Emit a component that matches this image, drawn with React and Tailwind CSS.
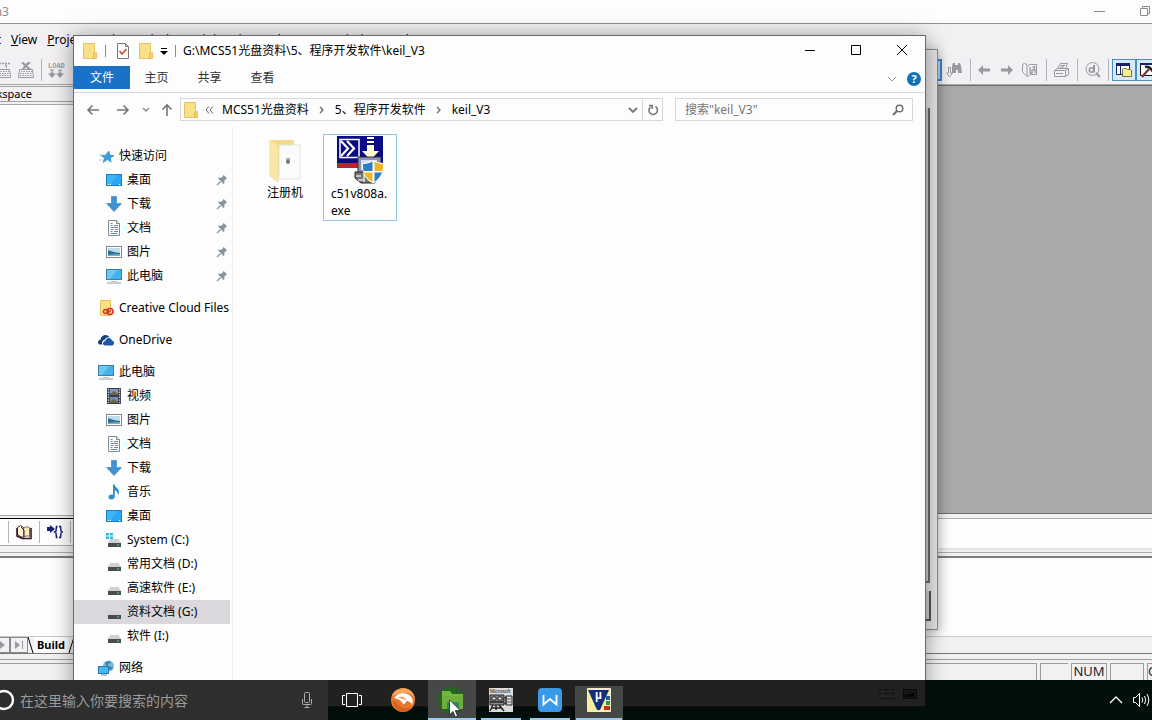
import React, { useState } from "react";

const Folder = ({ className = "w-4 h-4" }) => (
  <svg viewBox="0 0 16 16" className={className}>
    <path d="M1.5 .5h11v10l1 1v4h-12z" fill="#fbe08a" stroke="#e3c264" />
    <path d="M11.5 10.5l3-1v6h-3z" fill="#f7d162" stroke="#dcb54e" strokeWidth=".7" />
  </svg>
);

const Star = () => (
  <svg viewBox="0 0 16 16" className="w-4 h-4">
    <path d="M9.8 2l1 4 4.2.6-3.6 2.2.7 4.4-3.6-2.6L4 13.5l1.5-4.6L2 6.4l4.6-.2z" fill="#35a1dc" stroke="#2683bd" strokeWidth=".6" transform="translate(1 1)" />
    <path d="M1 7h3M1 12h3" stroke="#9dd0ee" />
  </svg>
);

const Desktop = () => (
  <svg viewBox="0 0 16 16" className="w-4 h-4">
    <rect x=".5" y="2.5" width="15" height="11" fill="#2ba8f5" stroke="#1a7dbd" />
    <path d="M1 3h10L4 13H1z" fill="#4fbcfb" opacity=".6" />
    <path d="M2 12.5h1M4 12.5h1M13 12.5h1" stroke="#fff" />
  </svg>
);

const Download = () => (
  <svg viewBox="0 0 16 16" className="w-4 h-4">
    <path d="M5.5.5h5v7h5L8 15.5.5 7.5h5z" fill="#3f93d5" stroke="#3580bb" strokeWidth=".6" />
  </svg>
);

const Doc = () => (
  <svg viewBox="0 0 16 16" className="w-4 h-4">
    <path d="M2.5.5h8l3 3v12h-11z" fill="#fff" stroke="#7f8b93" />
    <path d="M10.500.5v3h3" fill="#dde5ea" stroke="#7f8b93" />
    <path d="M4.500 3.500h2M4.500 5.500h2M8 5.500h4M4.500 7.500h7.500M4.500 9.500h3M9 9.500h3M4.500 11.500h2M8 11.500h4M4.500 13.500h7" stroke="#4a93b8" />
  </svg>
);

const Picture = () => (
  <svg viewBox="0 0 16 16" className="w-4 h-4">
    <rect x=".5" y="2.500" width="15" height="11" fill="#fff" stroke="#7f8b93" />
    <rect x="2" y="4" width="12" height="8" fill="#bcdff0" />
    <path d="M2 6.500c3 0 5 2 12 2.500v2H2z" fill="#2f6c88" />
    <path d="M2 11c4-1 8-.5 12-1v2H2z" fill="#6ab0cd" />
  </svg>
);

const Computer = () => (
  <svg viewBox="0 0 16 16" className="w-4 h-4">
    <rect x=".5" y="1.500" width="15" height="10" fill="#42b4ec" stroke="#3b7fa8" />
    <path d="M1 2h10L4 11H1z" fill="#7cd0f6" opacity=".7" />
    <path d="M5 13.500h6" stroke="#b6c6cf" />
    <path d="M1 15h14" stroke="#8ba1ae" />
  </svg>
);

const Creative = () => (
  <svg viewBox="0 0 16 16" className="w-4 h-4">
    <path d="M2.500.5h10v15h-10z" fill="#fbe08a" stroke="#e3c264" />
    <ellipse cx="8" cy="11.500" rx="2.500" ry="2" fill="none" stroke="#d8341c" strokeWidth="1.600" />
    <ellipse cx="12" cy="11.500" rx="3" ry="3" fill="none" stroke="#d8341c" strokeWidth="1.600" />
    <path d="M8.500 13.500l4.500-3" stroke="#d8341c" strokeWidth="1.300" />
  </svg>
);

const OneDrive = () => (
  <svg viewBox="0 0 16 16" className="w-4 h-4">
    <path d="M0 10.500c0-2 1.300-2.700 2.500-2.800C2.800 4.500 5.300 3 7.500 3c2 0 3.300 1 4 2.300C9 5 7 6.200 6.500 8 4.500 8 3.600 10 4.200 12.500H2C.8 12.500 0 11.700 0 10.500z" fill="#123f80" />
    <path d="M5 11.500c0-1.500 1-2.400 2.400-2.400C7.600 7 9.200 6 10.700 6c1.700 0 2.800 1 3.100 2.600 1.400.1 2.200 1 2.200 2.300 0 1.400-1 2.600-2.400 2.600H7.200C5.800 13.500 5 12.600 5 11.500z" fill="#1a57a6" />
  </svg>
);

const Video = () => (
  <svg viewBox="0 0 16 16" className="w-4 h-4">
    <rect x="1" y="0" width="14" height="16" fill="#3a3d42" />
    <path d="M2.500 1v14M13.500 1v14" stroke="#d7dade" strokeWidth="1.400" strokeDasharray="1.300 1.300" />
    <rect x="4" y="1" width="8" height="6" fill="#7b9ccf" />
    <rect x="4" y="9" width="8" height="6" fill="#6f8fc4" />
    <path d="M4 6l4-3 4 3v1H4zM4 14l3-3 5 3v1H4z" fill="#6e6248" />
  </svg>
);

const Music = () => (
  <svg viewBox="0 0 16 16" className="w-4 h-4">
    <path d="M7 .5h1.600c.5 3 4.400 4 4.400 7.500 0 1.500-.6 2.500-1.200 3.200C12 8.500 11 7 8.800 6.300V12.500c0 1.800-1.700 3-3.500 3S2.500 14.300 2.500 13c0-1.700 2-3 4.500-2.300z" fill="#2a8fcb" />
  </svg>
);

const Drive = ({ system }) => (
  <svg viewBox="0 0 16 16" className="w-4 h-4">
    {system && <path d="M0 1h3v2.500H0zM4 1h3v2.500H4zM0 4.500h3V7H0zM4 4.500h3V7H4z" fill="#2fb4dc" />}
    <path d="M4 7h8.500l2.500 4H2z" fill="#cfd2d3" />
    <path d="M2 11h13v4H2z" fill="#484c4f" />
    <path d="M11 13h2" stroke="#5fe08c" />
  </svg>
);

const Network = () => (
  <svg viewBox="0 0 16 16" className="w-4 h-4">
    <circle cx="10.500" cy="6" r="5.500" fill="#7ab6da" />
    <path d="M7 3c2-2 5-2 6-1-1 2-3 1-3 3s4 1 5 3c-2 2-3 2-5 1" fill="#3b83b4" />
    <rect x=".5" y="6.500" width="10" height="7" fill="#45b7f2" stroke="#2d79ab" />
    <path d="M3 15h6" stroke="#6f8d9e" />
  </svg>
);

const Pin = () => (
  <svg viewBox="0 0 12 12" className="w-3 h-3">
    <path d="M7.500.8l3.700 3.700-1.200.5L8.300 6.700l.2 2.600-1 .6L2.200 4.600l.6-1 2.600.2L7.100 2z" fill="#8795a1" />
    <path d="M4.500 7.500L1 11" stroke="#8795a1" strokeWidth="1.200" />
  </svg>
);

const groups = [
  {
    label: "快速访问",
    icon: <Star />,
    children: [
      { label: "桌面", icon: <Desktop />, pinned: true },
      { label: "下载", icon: <Download />, pinned: true },
      { label: "文档", icon: <Doc />, pinned: true },
      { label: "图片", icon: <Picture />, pinned: true },
      { label: "此电脑", icon: <Computer />, pinned: true },
    ],
  },
  { label: "Creative Cloud Files", icon: <Creative />, children: [] },
  { label: "OneDrive", icon: <OneDrive />, children: [] },
  {
    label: "此电脑",
    icon: <Computer />,
    children: [
      { label: "视频", icon: <Video /> },
      { label: "图片", icon: <Picture /> },
      { label: "文档", icon: <Doc /> },
      { label: "下载", icon: <Download /> },
      { label: "音乐", icon: <Music /> },
      { label: "桌面", icon: <Desktop /> },
      { label: "System (C:)", icon: <Drive system /> },
      { label: "常用文档 (D:)", icon: <Drive /> },
      { label: "高速软件 (E:)", icon: <Drive /> },
      { label: "资料文档 (G:)", icon: <Drive /> },
      { label: "软件 (I:)", icon: <Drive /> },
    ],
  },
  { label: "网络", icon: <Network />, children: [] },
];

const menus = ["View", "Project", "Debug", "Flash", "Peripherals", "Tools", "SVCS", "Window", "Help"];

const ToolDivider = () => <div className="w-px h-[22px] bg-[#b5b3b7] shrink-0" />;

const ToolButton = ({ label, children, className = "w-[23px]" }) => (
  <button aria-label={label} className={`h-[22px] shrink-0 flex items-center justify-center text-[#9b999d] ${className}`}>
    {children}
  </button>
);

const BuildIcon = ({ cancel }) => (
  <svg viewBox="0 0 16 16" className="w-4 h-4 shrink-0" fill="none" stroke="currentColor">
    <path d="M1.500 7.500h13l1 8H.5z" />
    <path d="M3 9.500h11M2 11.500h12M2 13.500h12" strokeDasharray="1.500 1" />
    {cancel ? (
      <path d="M4 .5c2 1 4 4 8 7M12 0C9 2 7 4 5 7" strokeWidth="2.200" />
    ) : (
      <path d="M1 1.500h14M3 3.500h3M10 3.500h3M4 5.500h1M11 5.500h1" strokeWidth="1.300" strokeDasharray="2 1" />
    )}
  </svg>
);

function KeilToolbar() {
  return (
    <div className="h-[28px] flex items-center shrink-0">
      <ToolButton label="Build target" className="w-[11px] overflow-hidden">
        <span className="flex justify-end w-[11px]"><BuildIcon /></span>
      </ToolButton>
      <ToolButton label="Stop build" className="w-[30px]"><BuildIcon cancel /></ToolButton>
      <ToolDivider />
      <ToolButton label="Download to flash" className="w-[28px]">
        <svg viewBox="0 0 18 18" className="w-[18px] h-[18px]">
          <text x="1" y="7" fontSize="7" fontWeight="bold" fontFamily="Liberation Mono, monospace" fill="currentColor">LOAD</text>
          <path d="M5 8.500V14M13 8.500V14" stroke="currentColor" strokeWidth="3" strokeDasharray="2 .8" />
          <path d="M1 12.500h8L5 17zM9 12.500h8L13 17z" fill="currentColor" />
        </svg>
      </ToolButton>
      <div className="flex items-center ml-auto w-[234px] overflow-hidden">
        <div className="w-[24px] h-[22px] shrink-0 bg-[#c2dcf3] border-2 border-[#3f86cc]" />
        <ToolButton label="Find in files" className="w-[28px] pr-1">
          <svg viewBox="0 0 18 16" className="w-[18px] h-4 shrink-0">
            <path d="M7 4l1-3h2v2h3V1h2l1 3 1 7h-4V8h-2v3H7z" fill="currentColor" />
            <path d="M3.500 5.500V11H1.500l3 4 3-4H5.500V5.500z" fill="#f3f1f4" stroke="currentColor" />
          </svg>
        </ToolButton>
        <ToolDivider />
        <ToolButton label="Back" className="w-[26px]">
          <svg viewBox="0 0 12 12" className="w-3 h-3"><path d="M0 6l5-5v3.500h7v3H5V11z" fill="currentColor" /></svg>
        </ToolButton>
        <ToolButton label="Forward" className="w-[20px]">
          <svg viewBox="0 0 12 12" className="w-3 h-3"><path d="M12 6L7 1v3.500H0v3h7V11z" fill="currentColor" /></svg>
        </ToolButton>
        <ToolButton label="Books" className="w-[29px] pr-1">
          <svg viewBox="0 0 16 16" className="w-4 h-4 shrink-0" fill="none" stroke="currentColor">
            <path d="M.5 3.500q0-2 2-2t2.500 2v11l-3-3-1.500-2zM5.500 3.500l3-1h6v10h-6l-3 2" />
            <path d="M8 5v6h2V8h3v3M10.500 5h2v2" strokeWidth="1.300" />
          </svg>
        </ToolButton>
        <ToolDivider />
        <ToolButton label="Print" className="w-[30px]">
          <svg viewBox="0 0 18 16" className="w-[18px] h-4" fill="none" stroke="currentColor">
            <path d="M4.500 6.500l3-5h7l-2 5M1.500 8.500l3-2h11v6l-3 2h-11zM1.500 8.500h11v6M12.500 8.500l3-2M8 3.500h4M7 5h4M3 11.500h7" />
          </svg>
        </ToolButton>
        <ToolDivider />
        <ToolButton label="Debug session" className="w-[30px]">
          <svg viewBox="0 0 16 16" className="w-4 h-4" fill="none" stroke="currentColor">
            <circle cx="7.500" cy="7" r="6.500" />
            <circle cx="6.500" cy="8" r="2.200" strokeWidth="1.600" />
            <path d="M9 3v7.500M11 11l4 4" strokeWidth="2" />
          </svg>
        </ToolButton>
        <ToolDivider />
        <div className="w-[3px] shrink-0" />
        <ToolButton label="Project window" className="w-[24px] bg-[#d7e9f8] border border-[#4a90ba]">
          <svg viewBox="0 0 16 16" className="w-4 h-4 shrink-0">
            <path d="M.5 1.500h13v11H.5z" fill="#fff" stroke="#15256b" />
            <path d="M0 1h14v3H0z" fill="#15256b" /><path d="M4.500 4v9" stroke="#15256b" />
            <path d="M6.500 7.500l1-1h3l1 1h3l1 1v6h-9z" fill="#f5ef9b" stroke="#77702a" />
          </svg>
        </ToolButton>
        <ToolButton label="Output window" className="w-[24px] bg-[#d7e9f8] border border-[#4a90ba]">
          <svg viewBox="0 0 16 16" className="w-4 h-4 shrink-0">
            <path d="M.5 1.500h15v12H.5z" fill="#fff" stroke="#111" /><path d="M0 1h16v2H0z" fill="#15256b" />
            <path d="M2 15L9 7" stroke="#7b3a34" strokeWidth="2.200" /><path d="M5 5c3-1 5 0 9 6" fill="none" stroke="#222" strokeWidth="2.400" />
          </svg>
        </ToolButton>
      </div>
    </div>
  );
}

function KeilWindow() {
  return (
    <div className="flex-1 min-h-0 flex flex-col bg-[#f2f0f3]">
      <div className="h-6 shrink-0 flex items-center bg-[#fdfdfd] border-b border-[#929193] text-[#8b8a8c]">
        <div className="w-[9px] flex justify-end overflow-hidden whitespace-nowrap">µVision3</div>
        <button aria-label="Minimize" className="ml-auto mr-[34px]">
          <svg viewBox="0 0 12 12" className="w-3 h-3"><path d="M1 5.500h11" stroke="currentColor" /></svg>
        </button>
        <button aria-label="Restore" className="mr-px">
          <svg viewBox="0 0 12 12" className="w-3 h-3" fill="none" stroke="currentColor"><path d="M1.500 2.500h7v7h-7zM3.500 2.500v-2h7v7h-2" /></svg>
        </button>
      </div>
      <div className="h-8 shrink-0 flex items-center gap-[10px] text-black">
        <div className="w-px flex justify-end overflow-hidden">Edit</div>
        {menus.map((m) => (
          <button key={m}>
            <span className="underline">{m[0]}</span>
            {m.slice(1)}
          </button>
        ))}
      </div>
      <KeilToolbar />
      <div className="flex-1 min-h-0 flex border-t border-[#a9a7aa]">
        <div className="w-[210px] flex flex-col">
          <div className="h-4 mt-px border-y border-[#a3a1a4] flex items-center text-[11px] text-black">
            <div className="w-8 flex justify-end overflow-hidden whitespace-nowrap">Project Workspace</div>
          </div>
          <div className="flex-1 mt-[2px] bg-[#fdfdfd] border-y border-[#aaa]" />
          <div className="h-7 mt-[2px] mb-1 border-t border-black flex items-center bg-[#fdfdfd] border-b border-b-[#aaa]">
            <div className="w-2 shrink-0" />
            <ToolDivider />
            <ToolButton label="Books" className="w-[30px]">
              <svg viewBox="0 0 16 16" className="w-4 h-4">
                <path d="M1.500 3.500l3-2 3 2v10l-3-1-3-2z" fill="#fbf6cf" stroke="#4a2436" />
                <path d="M7.500 4.500c2-2 4-2 6-1v9c-2-1-4-1-6 1z" fill="#f7ecc0" stroke="#8a6a50" />
                <path d="M1 4v8l5 2.500h9V4" fill="none" stroke="#3b1426" strokeWidth="1.600" />
                <path d="M5 3l3 3v7" fill="none" stroke="#3b1426" />
              </svg>
            </ToolButton>
            <ToolDivider />
            <ToolButton label="Functions" className="w-[30px]">
              <svg viewBox="0 0 16 16" className="w-4 h-4">
                <path d="M0 3h3V1l5 4-5 4V7H0z" fill="#1b2170" />
                <path d="M10.500 2.500H9.500L9 7 7.500 8 9 9l.5 4.500h1M12 2.500h1.500L14 7l1.500 1L14 9l-.5 4.500H12" fill="none" stroke="#1b2170" strokeWidth="1.500" />
              </svg>
            </ToolButton>
            <ToolDivider />
          </div>
        </div>
        <div className="flex-1 flex flex-col">
          <div className="flex-1 bg-[#aaa8ab] border-y border-[#6f6e70]" />
          <div className="h-8 mt-1 border-t border-[#b0aeb1] border-b-2 border-b-[#e4e2e5] bg-[#fdfdfd]" />
        </div>
      </div>
      <div className="h-[102px] mt-[2px] shrink-0 flex flex-col border-t border-[#aaa]">
        <div className="flex-1 mt-[3px] bg-[#fdfdfd] border-t-2 border-[#7d7b7e] border-b border-b-[#c9c7ca]" />
        <div className="h-[17px] flex border-b border-[#777]">
          <button aria-label="Next tab" className="w-[10px] flex items-center border border-l-0 border-[#8b898c] text-[#9b999d]">
            <svg viewBox="0 0 8 10" className="w-2 h-[10px]"><path d="M0 1l5 4-5 4z" fill="currentColor" /></svg>
          </button>
          <button aria-label="Last tab" className="w-[18px] flex items-center justify-center border border-[#8b898c] text-[#9b999d]">
            <svg viewBox="0 0 8 10" className="w-2 h-[10px]"><path d="M0 1l5 4-5 4z" fill="currentColor" /><path d="M7.500 1v8" stroke="currentColor" /></svg>
          </button>
          <svg viewBox="0 0 6 16" className="w-[6px] h-4"><path d="M0 0l5 16" stroke="#000" /></svg>
          <button className="px-[3px] font-bold text-[11px] text-black bg-[#fdfdfd]">Build</button>
          <svg viewBox="0 0 6 16" className="w-[6px] h-4"><path d="M6 0L1 16" stroke="#000" /></svg>
        </div>
      </div>
      <div className="h-[21px] mt-[5px] shrink-0 pt-[3px] flex gap-[3px] border-t border-[#9d9b9e] text-[13px] text-[#222]">
        <div className="flex-1 border-t border-r border-[#9d9b9e]" />
        <div className="w-7 border-t border-l border-[#9d9b9e]" />
        <div className="w-9 border-t border-x border-[#9d9b9e] flex items-center justify-center">NUM</div>
        <div className="w-[34px] border-t border-x border-[#9d9b9e]" />
        <div className="w-[5px] border-t border-l border-[#9d9b9e] flex items-center overflow-hidden">OVR</div>
      </div>
    </div>
  );
}

function NavPane() {
  const [selected, setSelected] = useState("资料文档 (G:)");

  return (
    <nav className="w-[156px] shrink-0 pt-[18px] flex flex-col gap-2 overflow-hidden text-black">
      {groups.map((group) => (
        <div key={group.label + group.children.length}>
          <button className="h-6 w-full pl-6 flex items-center gap-[5px] whitespace-nowrap">
            <span className="shrink-0">{group.icon}</span>
            {group.label}
          </button>
          {group.children.map((item) => (
            <button
              key={item.label}
              onClick={() => setSelected(item.label)}
              className={`h-6 w-full pl-8 pr-[2px] flex items-center gap-[5px] whitespace-nowrap ${
                item.label === selected ? "bg-[#dad8dd]" : ""
              }`}
            >
              <span className="shrink-0">{item.icon}</span>
              {item.label}
              {item.pinned && <span className="ml-auto"><Pin /></span>}
            </button>
          ))}
        </div>
      ))}
    </nav>
  );
}

const Crumb = ({ children }) => <button className="whitespace-nowrap">{children}</button>;

const CrumbArrow = () => (
  <svg viewBox="0 0 6 8" className="w-[6px] h-2 shrink-0" fill="none" stroke="#666" strokeWidth="1.300"><path d="M1 1l3 3-3 3" /></svg>
);

function Explorer() {
  return (
    <section className="absolute left-[73px] right-[226px] top-[35px] bottom-[13px] bg-[#fdfdfd] border border-[#6a696b] shadow-[0_2px_20px_rgba(0,0,0,0.4)] flex flex-col text-black">
      <header className="h-[30px] shrink-0 flex items-center pl-2">
        <Folder className="w-4 h-4 mr-[7px]" />
        <div className="w-px h-3 bg-[#8a8a8a] mr-[9px]" />
        <button aria-label="属性" className="mr-[7px]">
          <svg viewBox="0 0 16 16" className="w-4 h-4">
            <path d="M2.500.5h8l3 3v12h-11z" fill="#fdfdfd" stroke="#77767a" />
            <path d="M10.500.5v3h3" fill="none" stroke="#77767a" />
            <path d="M4.500 8l2.500 3 4.500-5" fill="none" stroke="#c4532d" strokeWidth="1.600" />
          </svg>
        </button>
        <button aria-label="新建文件夹" className="mr-[6px]"><Folder /></button>
        <button aria-label="自定义快速访问工具栏" className="mr-[7px]">
          <svg viewBox="0 0 8 8" className="w-2 h-2"><path d="M1 1.500h6" stroke="#000" /><path d="M0 4h8L4 8z" /></svg>
        </button>
        <div className="w-px h-3 bg-[#8a8a8a] mr-[7px]" />
        <h1>G:\MCS51光盘资料\5、程序开发软件\keil_V3</h1>
        <div className="ml-auto flex">
          <button aria-label="最小化" className="w-[46px] h-[30px] flex items-center justify-center">
            <svg viewBox="0 0 12 12" className="w-3 h-3"><path d="M1 5.500h10" stroke="#000" /></svg>
          </button>
          <button aria-label="最大化" className="w-[46px] h-[30px] flex items-center justify-center">
            <svg viewBox="0 0 12 12" className="w-3 h-3"><path d="M1.500 .5h9v9h-9z" fill="none" stroke="#000" /></svg>
          </button>
          <button aria-label="关闭" className="w-[46px] h-[30px] flex items-center justify-center">
            <svg viewBox="0 0 12 12" className="w-3 h-3"><path d="M1 0l10 10M11 0L1 10" stroke="#000" /></svg>
          </button>
        </div>
      </header>

      <div className="h-[27px] shrink-0 flex items-start border-b border-[#d5d8da] text-[#333]">
        <button className="w-14 h-[23px] bg-[#1a72c8] text-white">文件</button>
        <button className="w-[53px] h-[23px]">主页</button>
        <button className="w-[53px] h-[23px]">共享</button>
        <button className="w-[53px] h-[23px]">查看</button>
        <button aria-label="展开功能区" className="ml-auto mr-[10px] h-[26px]">
          <svg viewBox="0 0 10 10" className="w-[10px] h-[10px]" fill="none" stroke="#999"><path d="M1 3l4 4 4-4" /></svg>
        </button>
        <button aria-label="帮助" className="mr-1 mt-[6px] w-[14px] h-[14px] rounded-full bg-[#1272b8] text-white text-[11px] leading-[14px] font-bold">?</button>
      </div>

      <div className="h-[33px] shrink-0 flex items-center pl-3">
        <button aria-label="后退" className="mr-[16px]">
          <svg viewBox="0 0 14 14" className="w-[14px] h-[14px]" fill="none" stroke="#757575" strokeWidth="1.600"><path d="M13 7H2M6.500 2.500L2 7l4.500 4.500" /></svg>
        </button>
        <button aria-label="前进" className="mr-[12px]">
          <svg viewBox="0 0 14 14" className="w-[14px] h-[14px]" fill="none" stroke="#757575" strokeWidth="1.600"><path d="M1 7h11M7.500 2.500L12 7l-4.500 4.500" /></svg>
        </button>
        <button aria-label="最近浏览的位置" className="mr-[10px]">
          <svg viewBox="0 0 8 8" className="w-2 h-2" fill="none" stroke="#888" strokeWidth="1.400"><path d="M1 2l3 3 3-3" /></svg>
        </button>
        <button aria-label="上移" className="mr-[6px]">
          <svg viewBox="0 0 14 14" className="w-[14px] h-[14px]" fill="none" stroke="#757575" strokeWidth="1.600"><path d="M7 13V2M2.500 6.500L7 2l4.500 4.500" /></svg>
        </button>
        <div className="flex-1 h-[23px] flex items-center border border-[#d6d8da] pl-[2px]">
          <Folder />
          <button aria-label="上级文件夹" className="w-[23px] flex justify-center pr-[3px]">
            <svg viewBox="0 0 9 8" className="w-[9px] h-2" fill="none" stroke="#666"><path d="M4 .5L1 4l3 3.500M8 .5L5 4l3 3.500" /></svg>
          </button>
          <Crumb>MCS51光盘资料</Crumb>
          <span className="w-[26px] flex justify-center"><CrumbArrow /></span>
          <Crumb>5、程序开发软件</Crumb>
          <span className="w-[26px] flex justify-center"><CrumbArrow /></span>
          <Crumb>keil_V3</Crumb>
          <button aria-label="以前的位置" className="ml-auto mr-1">
            <svg viewBox="0 0 10 10" className="w-[10px] h-[10px]" fill="none" stroke="#777" strokeWidth="1.800"><path d="M1 3l4 4 4-4" /></svg>
          </button>
          <button aria-label="刷新" className="w-5 h-[21px] border-l border-[#d6d8da] flex items-center justify-center">
            <svg viewBox="0 0 12 12" className="w-3 h-3" fill="none" stroke="#707070" strokeWidth="1.500"><path d="M8.500 2.500A4.300 4.300 0 1 1 3.500 2.800" /><path d="M2 1.500h3.200v3.300" /></svg>
          </button>
        </div>
        <div className="w-[238px] h-[23px] ml-3 mr-3 flex items-center border border-[#d6d8da] pl-[9px] pr-2">
          <input aria-label="搜索" placeholder={'搜索"keil_V3"'} className="flex-1 min-w-0 outline-none placeholder:text-[#757575]" />
          <svg viewBox="0 0 12 12" className="w-3 h-3" fill="none" stroke="#707070" strokeWidth="1.500"><circle cx="7.500" cy="4.500" r="3.300" /><path d="M5 7l-4 4" strokeWidth="2" /></svg>
        </div>
      </div>

      <div className="flex-1 min-h-0 flex">
        <NavPane />
        <main className="flex-1 ml-[2px] border-l border-[#f0eff1] pt-2 pl-[15px] flex items-start gap-px">
          <button className="w-[74px] h-[87px] pt-[5px] flex flex-col items-center">
            <svg viewBox="0 0 34 43" className="w-[34px] h-[43px]">
              <path d="M2 1h24v35H2z" fill="#f3da8a" />
              <path d="M11 6h21v34H11z" fill="#fbfbfb" stroke="#e6e4e0" />
              <path d="M2 1l8 5v37l-8-6z" fill="#fbe7a4" stroke="#ecd288" strokeWidth=".6" />
              <ellipse cx="20" cy="22" rx="2" ry="3" fill="#777" />
              <path d="M19 20l2 1" stroke="#ccc" />
            </svg>
            <span className="leading-[17px] mt-[2px]">注册机</span>
          </button>
          <button className="w-[74px] h-[87px] pt-px flex flex-col items-center border border-[#93c6e4]">
            <svg viewBox="0 0 48 48" className="w-12 h-12">
              <path d="M1 0h46v31H1z" fill="#0b0b86" />
              <path d="M1 27h23v5H1z" fill="#c2202c" />
              <path d="M4 3.500h19v18H4z" fill="none" stroke="#fff" strokeWidth="1.500" />
              <path d="M5 5l7 7.500L5 20M11 5l7 7.500-7 7.500" fill="none" stroke="#fff" strokeWidth="2.200" />
              <path d="M31 1h7v2h-7zM31 5h7v2h-7z" fill="#fff" />
              <path d="M31 9h7v6h5l-8.500 9L26 15h5z" fill="#fffbd0" />
              <path d="M22 21h23v16H22z" fill="#8f93b8" stroke="#333" />
              <path d="M25 24h16v10H25z" fill="#d7dcf0" />
              <path d="M19 36h20v11H25l-6-5z" fill="#777" stroke="#222" />
              <path d="M20 40h5M22 44h7M28 38v8" stroke="#ddd" strokeWidth="1.500" />
              <path d="M26 27c4 0 8-1 11.500-3 3 2 6 3 10.500 3 0 10-3 17-10.500 20.500C29 44 26 37 26 27z" fill="#fff" />
              <path d="M27 28c4 0 7-1 9.500-2.500V35H27.500c-.4-2-.5-4-.5-7zM38.500 36.500H46c-1.500 4-4 7-7.500 9.500z" fill="#2b7fc4" />
              <path d="M38.500 25.500C41 27 43 28 47 28c0 3 0 5-.5 7h-8zM28 36.500h8.500V46c-4-2-7-5.500-8.500-9.500z" fill="#f0b428" />
            </svg>
            <span className="w-full pl-[7px] mt-px leading-[17px] text-left">c51v808a.<br />exe</span>
          </button>
        </main>
      </div>

      <footer className="h-6 shrink-0 flex items-center justify-end gap-2 pr-2">
        <button aria-label="详细信息">
          <svg viewBox="0 0 16 12" className="w-4 h-3" stroke="#555"><path d="M0 1.500h3M5 1.500h5M12 1.500h4M0 5.500h3M5 5.500h5M12 5.500h4M0 10.500h3M5 10.500h5M12 10.500h4" /></svg>
        </button>
        <button aria-label="大图标">
          <svg viewBox="0 0 14 12" className="w-[14px] h-3"><path d="M.5 1.500h13v9H.5z" fill="#999" stroke="#333" /><path d="M2 9V6l3 1 6-3v5z" fill="#111" /></svg>
        </button>
      </footer>
    </section>
  );
}

// Installer dialog sitting behind the explorer window
function SetupDialog() {
  return (
    <section className="absolute left-[400px] right-[214px] top-[49px] bottom-[90px] pt-[58px] pb-[8px] pr-[6px] flex flex-col gap-2 bg-[#e6e4e7] border border-[#8a888b] shadow-[2px_2px_10px_rgba(0,0,0,0.25)]">
      <div className="flex-1 mr-px border-r-2 border-b-2 border-[#6d6b6e] bg-[#cfcdd0]" />
      <div className="h-[30px] border-r-2 border-b-2 border-[#555356] bg-[#cfcdd0]" />
    </section>
  );
}

const tasks = [
  {
    label: "UC浏览器",
    icon: (
      <svg viewBox="0 0 26 26" className="w-[26px] h-[26px]">
        <circle cx="13" cy="13" r="12" fill="#e8782c" />
        <path d="M2 9C4 3 10 1 15 1.300 20 2 24 6 25 12c-2-4-5-6-9-6C10 6 7 8 2 9z" fill="#f6a55a" />
        <path d="M4 11c3-4 8-6 13-4 5 2 7 6 5 11-1-3-3-4-6-4 0 2-1 3-3 3-1-3-4-5-9-6z" fill="#fff" />
        <path d="M8 10c4-1 7 0 9 3-3-1-6-1-9-3z" fill="#f0a070" />
        <path d="M3 14c4 1 5 5 10 7 3 1 6 0 8-2-2 4-5 6-8 6-5 0-9-5-10-11z" fill="#d8601c" />
      </svg>
    ),
  },
  {
    label: "文件资源管理器",
    open: true,
    button: "bg-[#464846]",
    bar: "w-full",
    icon: (
      <svg viewBox="0 0 28 28" className="w-7 h-7">
        <circle cx="13" cy="14" r="13" fill="#1d6b14" opacity=".8" />
        <path d="M4 5h8l2 3h11v15H4z" fill="#79b543" />
        <path d="M4 10h21v13H4z" fill="#6fae3c" />
        <path d="M9 16h12v7h-3v-4h-6v4H9z" fill="#2f8a59" />
      </svg>
    ),
  },
  {
    label: "屏幕录像",
    open: true,
    bar: "w-10",
    icon: (
      <svg viewBox="0 0 24 24" className="w-6 h-6">
        <path d="M0 0h24v24H0z" fill="#dcdcdc" />
        <text x="1" y="5" fontSize="5" fontFamily="Liberation Sans, sans-serif" fill="#111">Microsoft</text>
        <path d="M1 7h14v10H1z" fill="#8d8d8d" stroke="#222" />
        <path d="M15 10l2-1v7l-2-1zM17 8h6v9h-6z" fill="#ddd" stroke="#222" />
        <path d="M3 9h4v3H3zM9 9h4v3H9z" fill="#e8e8e8" stroke="#222" />
        <path d="M1 14h13M4 17l-3 6M10 17l5 6M7 17v5M2 20h11" stroke="#222" strokeWidth="1.500" />
        <path d="M18 11h4M18 14h4" stroke="#555" />
      </svg>
    ),
  },
  {
    label: "WPS",
    open: true,
    bar: "w-10",
    icon: (
      <svg viewBox="0 0 24 24" className="w-6 h-6">
        <rect width="24" height="24" rx="4" fill="#3b9ae8" />
        <path d="M5.500 7v9.500L12 11l6.500 5.500V7" fill="none" stroke="#fff" strokeWidth="1.800" />
      </svg>
    ),
  },
  {
    label: "Keil uVision3",
    open: true,
    button: "bg-[linear-gradient(#0000_6px,#454745_6px)]",
    bar: "w-[46px]",
    icon: (
      <svg viewBox="0 0 24 24" className="w-6 h-6">
        <path d="M.5.5h23v23H.5z" fill="#f6ec9e" stroke="#f5f0c8" />
        <path d="M1 2h21L13 22h-3z" fill="#12307e" />
        <text x="8" y="11" fontSize="12" fontWeight="bold" fontFamily="Liberation Sans, sans-serif" fill="#fff">µ</text>
        <path d="M19 8h4v4h-4z" fill="#2458a8" /><path d="M19 13h4v4h-4z" fill="#2c9a3e" /><path d="M17 18h6v4h-6z" fill="#d12b20" />
      </svg>
    ),
  },
];

function Taskbar() {
  return (
    <footer className="absolute inset-x-0 bottom-0 h-10 flex bg-[rgba(2,3,0,0.88)] text-white">
      <div className="w-[328px] shrink-0 flex items-center bg-[#2e2e2e]">
        <div className="w-[15px] flex justify-end overflow-hidden">
          <svg viewBox="0 0 22 22" className="w-[22px] h-[22px] shrink-0"><circle cx="11" cy="11" r="9" fill="none" stroke="#fff" strokeWidth="2.400" /></svg>
        </div>
        <input aria-label="搜索" placeholder="在这里输入你要搜索的内容" className="ml-[5px] flex-1 min-w-0 text-[14px] outline-none placeholder:text-[#9a9a9a]" />
        <button aria-label="语音" className="mr-[14px]">
          <svg viewBox="0 0 14 18" className="w-[14px] h-[18px]" fill="none" stroke="#aaa"><rect x="4.500" y="1.500" width="5" height="10" rx="1" /><path d="M2.500 8v4.500q0 1 1 1h7q1 0 1-1V8M7 13.500v3M4.500 16.500h5" /></svg>
        </button>
      </div>
      <button aria-label="任务视图" className="w-[50px] pr-[2px] flex items-center justify-center">
        <svg viewBox="0 0 20 14" className="w-5 h-[14px]" fill="none" stroke="#fff"><path d="M4.500.5h11v13h-11zM3 2.500H.5v9H3M17 2.500h2.500v9H17" /></svg>
      </button>
      <div className="flex gap-px">
        {tasks.map((t) => (
          <button key={t.label} aria-label={t.label} className={`relative w-12 h-10 flex items-center justify-center first:ml-px ${t.button || ""}`}>
            {t.icon}
            {t.open && (
              <span className="absolute inset-x-0 bottom-0 flex justify-center">
                <span className={`h-[2px] bg-[#9cc9ee] ${t.bar}`} />
              </span>
            )}
          </button>
        ))}
      </div>
      <div className="ml-auto flex items-center gap-[9px] pr-[2px]">
        <button aria-label="显示隐藏的图标">
          <svg viewBox="0 0 14 10" className="w-[14px] h-[10px]" fill="none" stroke="#fff" strokeWidth="1.300"><path d="M1 8l6-6 6 6" /></svg>
        </button>
        <button aria-label="音量">
          <svg viewBox="0 0 18 16" className="w-[18px] h-4" fill="none" stroke="#fff"><path d="M1.500 5.500h2l4-4v13l-4-4h-2zM10 5.500q1.500 2.500 0 5M12.500 4q2.500 4 0 8M15 2q3.500 6 0 12" /></svg>
        </button>
      </div>
    </footer>
  );
}

const Cursor = () => (
  <svg viewBox="0 0 12 19" className="absolute left-[449px] bottom-[2px] w-3 h-[19px]">
    <path d="M.5.8v15l3.500-3.300 2.300 5.500 2.300-1L6.300 11.600h5z" fill="#fff" stroke="#222" strokeWidth=".8" />
  </svg>
);

function App() {
  return (
    <div className="relative h-screen overflow-hidden flex flex-col pb-10 bg-[#00645a] text-[12px] font-['Noto_Sans','Noto_Sans_CJK_SC',sans-serif]">
      <KeilWindow />
      <SetupDialog />
      <Explorer />
      <Taskbar />
      <Cursor />
    </div>
  );
}

export default App;
